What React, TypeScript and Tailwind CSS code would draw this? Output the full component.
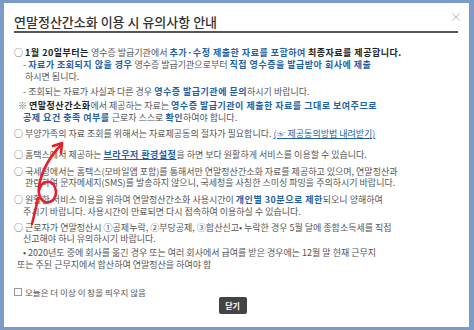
import React from 'react';

const blue = 'text-[#1f5fa6] font-bold tracking-[0.5px]';
const dark = 'text-[#222] font-bold tracking-[0.5px]';

function Line({ className = '', children }: { className?: string; children: React.ReactNode }) {
  return <div className={`whitespace-nowrap leading-[11.5px] h-[11.5px] ${className}`}>{children}</div>;
}

export default function App() {
  return (
    <div className="w-[474px] h-[330px] bg-[#7b9bc9] pt-[3px] pl-[4px] pr-[5px] pb-[3px] overflow-hidden">
      <div
        className="relative bg-white h-full pl-[10px] pr-[11px] text-[9px] text-[#555]"
        style={{ fontFamily: '"Noto Sans CJK KR", "Noto Sans", sans-serif' }}
      >
        {/* header */}
        <div className="pt-[11px]">
          <div className="text-[13px] leading-[16px] h-[16px] text-[#333] font-medium">연말정산간소화 이용 시 유의사항 안내</div>
          <div className="mt-[1px] h-[2px] bg-[#555]" />
        </div>
        <button className="absolute right-[9px] top-[10px] w-[8px] h-[8px]">
          <svg viewBox="0 0 8 8" className="w-[8px] h-[8px]">
            <path d="M0.5 0.5 L7.5 7.5 M7.5 0.5 L0.5 7.5" stroke="#aaa" strokeWidth="0.8" />
          </svg>
        </button>

        {/* notices */}
        <div className="mt-[13.75px]">
          <Line>
            ○ <span className={dark}>1월 20일부터는</span> 영수증 발급기관에서 <span className={blue}>추가·수정 제출한 자료를 포함하여</span>{' '}
            <span className={dark}>최종자료를 제공합니다.</span>
          </Line>
          <Line className="mt-[1px] pl-[9px]">
            - <span className={blue}>자료가 조회되지 않을 경우</span> 영수증 발급기관으로부터 <span className={blue}>직접 영수증을 발급받아 회사에 제출</span>
          </Line>
          <Line className="pl-[11px]">하시면 됩니다.</Line>
          <Line className="mt-[4px] pl-[9px]">
            - 조회되는 자료가 사실과 다른 경우 <span className={blue}>영수증 발급기관에 문의</span>하시기 바랍니다.
          </Line>
          <Line className="mt-[2.5px] pl-[4px]">
            ※ <span className={dark}>연말정산간소화</span>에서 제공하는 자료는 <span className={blue}>영수증 발급기관이 제출한 자료를 그대로 보여주므로</span>
          </Line>
          <Line className="pl-[9px]">
            <span className={blue}>공제 요건 충족 여부를</span> 근로자 스스로 <span className={blue}>확인</span>하여야 합니다.
          </Line>
          <Line className="mt-[5px]">
            ○ 부양가족의 자료 조회를 위해서는 자료제공동의 절차가 필요합니다.{' '}
            <span className="text-[#1f5fa6] underline">(☞ 제공동의방법 내려받기)</span>
          </Line>
          <Line className="mt-[9px]">
            ○ 홈택스에서 제공하는 <span className={`${blue} underline`}>브라우저 환경설정</span>을 하면 보다 원활하게 서비스를 이용할 수 있습니다.
          </Line>
          <Line className="mt-[5.5px]">○ 국세청에서는 홈택스(모바일앱 포함)를 통해서만 연말정산간소화 자료를 제공하고 있으며, 연말정산과</Line>
          <Line className="pl-[11px]">관련하여 문자메세지(SMS)를 발송하지 않으니, 국세청을 사칭한 스미싱 파밍을 주의하시기 바랍니다.</Line>
          <Line className="mt-[5.5px]">
            ○ 원활한 서비스 이용을 위하여 연말정산간소화 사용시간이 <span className={blue}>개인별 30분으로 제한</span>되오니 양해하여
          </Line>
          <Line className="pl-[9px]">주시기 바랍니다. 사용시간이 만료되면 다시 접속하여 이용하실 수 있습니다.</Line>
          <Line className="mt-[4.5px]">○ 근로자가 연말정산시 ①공제누락, ②부당공제, ③합산신고• 누락한 경우 5월 달에 종합소득세를 직접</Line>
          <Line className="pl-[9px]">신고해야 하니 유의하시기 바랍니다.</Line>
          <Line className="mt-[2.5px] pl-[9px]">• 2020년도 중에 회사를 옮긴 경우 또는 여러 회사에서 급여를 받은 경우에는 12월 말 현재 근무지</Line>
          <Line className="pl-[3px]">또는 주된 근무지에서 합산하여 연말정산을 하여야 함</Line>
        </div>

        {/* footer */}
        <label className="mt-[17px] flex items-center gap-[3px] h-[10px] text-[8.5px] text-[#555]">
          <span className="w-[8px] h-[8px] border border-[#999] bg-white" />
          오늘은 더 이상 이 창을 띄우지 않음
        </label>
        <div className="flex justify-center">
          <button className="w-[28px] h-[17px] rounded-[2px] bg-[#444] text-white text-[8px] font-bold leading-[17px] ml-[-7px]">
            닫기
          </button>
        </div>

        {/* red hand-drawn arrow */}
        <svg className="absolute left-0 top-0 pointer-events-none" width="120" height="240" viewBox="0 0 120 240">
          <g transform="translate(-4 -3)" fill="none" stroke="#e3202b" strokeWidth="2.6" strokeLinecap="round" strokeLinejoin="round">
            <path d="M62 144 C50 156 42 170 39 186 C37 200 46 206 53 200 C59 193 55 180 46 182 C42 183 40 187 39 190" />
            <path d="M38 198 C36 208 34 216 32 224" />
            <path d="M53 146 L62 143 L61 153" />
          </g>
        </svg>
      </div>
    </div>
  );
}
